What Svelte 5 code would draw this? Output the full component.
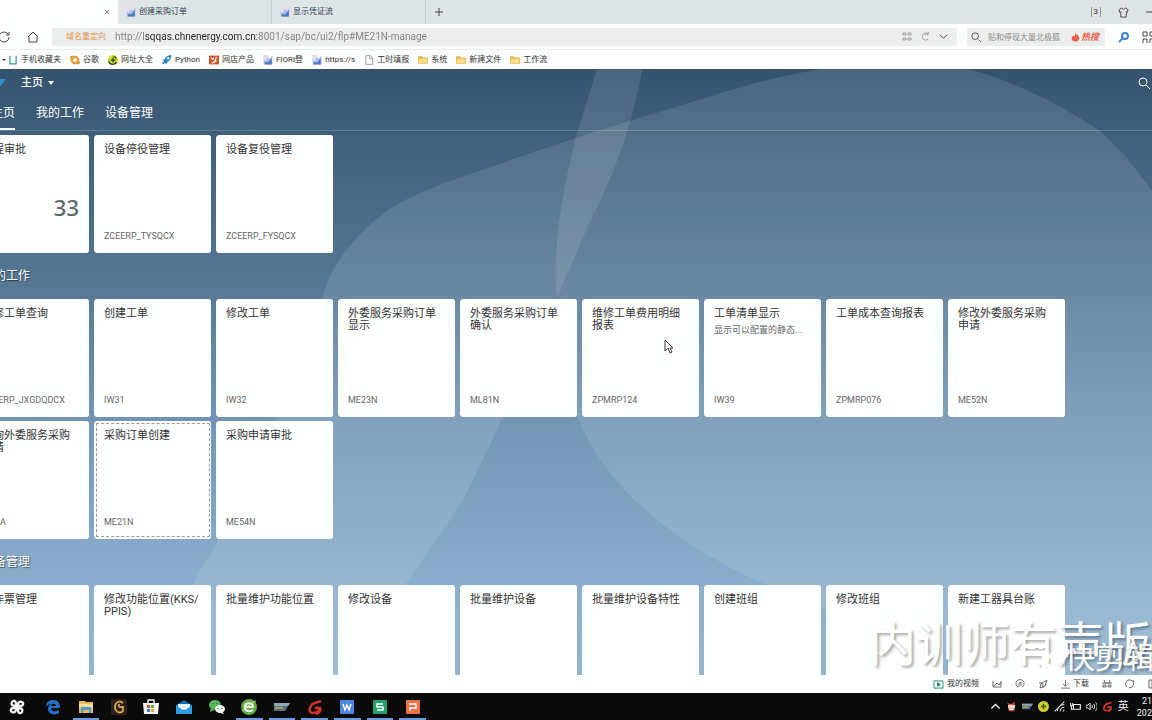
<script>
  let address = 'http://lsqqas.chnenergy.com.cn:8001/sap/bc/ui2/flp#ME21N-manage'
  let keyword = '贴和停现大量北极狐'
  let current = 'ME21N'

  const tabs = ['创建采购订单', '显示凭证流']

  const bookmarks = [
    { icon: 'phone', label: '手机收藏夹' },
    { icon: 'song', label: '谷歌' },
    { icon: 'compass', label: '网址大全' },
    { icon: 'rocket', label: 'Python' },
    { icon: 'shop', label: '网店产品' },
    { icon: 'sap', label: 'FIORI登' },
    { icon: 'sap', label: 'https://s' },
    { icon: 'page', label: '工时填报' },
    { icon: 'folder', label: '系统' },
    { icon: 'folder', label: '新建文件' },
    { icon: 'folder', label: '工作流' }
  ]

  const sections = ['主页', '我的工作', '设备管理']

  const groups = [
    {
      title: '',
      tiles: [
        { title: '流程审批', count: 33 },
        { title: '设备停役管理', code: 'ZCEERP_TYSQCX' },
        { title: '设备复役管理', code: 'ZCEERP_FYSQCX' }
      ]
    },
    {
      title: '我的工作',
      tiles: [
        { title: '维修工单查询', code: 'ZCEERP_JXGDQDCX' },
        { title: '创建工单', code: 'IW31' },
        { title: '修改工单', code: 'IW32' },
        { title: '外委服务采购订单显示', code: 'ME23N' },
        { title: '外委服务采购订单确认', code: 'ML81N' },
        { title: '维修工单费用明细报表', code: 'ZPMRP124' },
        { title: '工单清单显示', sub: '显示可以配置的静态...', code: 'IW39' },
        { title: '工单成本查询报表', code: 'ZPMRP076' },
        { title: '修改外委服务采购申请', code: 'ME52N' },
        { title: '查询外委服务采购申请', code: 'ME5A' },
        { title: '采购订单创建', code: 'ME21N' },
        { title: '采购申请审批', code: 'ME54N' }
      ]
    },
    {
      title: '设备管理',
      tiles: [
        { title: '工作票管理' },
        { title: '修改功能位置(KKS/\nPPIS)' },
        { title: '批量维护功能位置' },
        { title: '修改设备' },
        { title: '批量维护设备' },
        { title: '批量维护设备特性' },
        { title: '创建班组' },
        { title: '修改班组' },
        { title: '新建工器具台账' }
      ]
    }
  ]

  const apps = [
    { icon: 'edge' },
    { icon: 'explorer', open: true },
    { icon: 'gold' },
    { icon: 'store' },
    { icon: 'mail' },
    { icon: 'wechat' },
    { icon: 'browser', open: true },
    { icon: 'logon', open: true },
    { icon: 'redg', open: true },
    { icon: 'writer', open: true },
    { icon: 'sheet', open: true },
    { icon: 'slides', open: true }
  ]

  const tray = ['up', 'santa', 'logon', 'shield', 'wifi', 'battery', 'volume', 'redg']
</script>

{#snippet mark(name)}
  <svg class="mark" viewBox="0 0 16 16" aria-hidden="true">
    {#if name === 'sap'}
      <path d="M0 0h9v9H0z" fill="#ead9ea" />
      <path d="M1 15V8l4 1 3-5 3 2 4-5v14z" fill="#9fbcec" />
      <path d="M3 15v-4l5 1 6-7v10z" fill="#3d63b5" opacity=".8" />
    {:else if name === 'phone'}
      <path d="M3 1v13h10V1" fill="none" stroke="#3a9d83" stroke-width="2" />
    {:else if name === 'song'}
      <circle cx="8" cy="8" r="7" fill="#e2a13e" />
      <path d="M8 4l4 4-4 4-4-4z" fill="#fff3d6" />
      <path d="M0 5l4-4M12 15l4-4" stroke="#b9772a" stroke-width="2" />
    {:else if name === 'compass'}
      <circle cx="8" cy="8" r="8" fill="#d3dc2e" />
      <path d="M1 10a7 7 0 0 0 13 1M8 4v8M4 8h8M9 2a5 5 0 0 1 4 4" fill="none" stroke="#244a1c" stroke-width="2" />
    {:else if name === 'rocket'}
      <path d="M15 0C9 0 5 4 4 7l-4 1 4 2 2 5 3-4c4-2 6-6 6-11z" fill="#2b86c8" />
      <circle cx="10" cy="5" r="2" fill="#e8f4fc" />
      <path d="M1 14l4-4" stroke="#1b5c94" stroke-width="2" />
    {:else if name === 'shop'}
      <path d="M0 1h16v14H0z" fill="#c9552f" />
      <path d="M3 4l3 3 2-3M4 13c4 0 6-3 8-10M8 12l4-3" fill="none" stroke="#fbe3cf" stroke-width="2" />
    {:else if name === 'page'}
      <path d="M3 1h7l4 4v10H3zM9 1v5h5" fill="#fff" stroke="#888" stroke-width="1.3" />
    {:else}
      <path d="M0 2h6l2 2h8v10H0z" fill="#e9b44f" />
      <path d="M1 6h14v7H1z" fill="#fbdc8c" />
    {/if}
  </svg>
{/snippet}

{#snippet appIcon(name)}
  <svg class="app-icon" viewBox="0 0 16 16" aria-hidden="true">
    {#if name === 'start'}
      <g fill="none" stroke="#f4f4f4" stroke-width="2.4" stroke-linecap="round">
        <path d="M7 7V4c0-2-3-3-4-1s0 4 3 4" />
        <path d="M9 7h3c2 0 3-3 1-4s-4 0-4 3" />
        <path d="M9 9v3c0 2 3 3 4 1s0-4-3-4" />
        <path d="M7 9H4c-2 0-3 3-1 4s4 0 4-3" />
      </g>
    {:else if name === 'edge'}
      <path d="M1 8C1 3 4 1 8 1c5 0 7 3 7 8H6c0 4 5 4 8 2v3c-5 3-11 1-11-4 0-3 2-5 4-5-3 0-5 1-6 3zm5-1h5c0-3-5-3-5 0z" fill="#1f73c9" />
    {:else if name === 'explorer'}
      <path d="M1 2h6l1 1h7v11H1z" fill="#e8bd5c" />
      <path d="M1 5h14v4H1z" fill="#f9dc93" />
      <path d="M3 8h10v6h-2v-3H5v3H3z" fill="#4b9ac9" />
    {:else if name === 'gold'}
      <rect x="0" y="0" width="16" height="16" rx="2" fill="#2b2219" />
      <path d="M12 4C9 1 4 3 4 8s5 7 8 4V8H8M8 5v3" fill="none" stroke="#d99f4c" stroke-width="1.8" />
    {:else if name === 'store'}
      <path d="M0 4h16l-1 11H1z" fill="#f7f7f2" />
      <path d="M5 4V1h6v3" fill="none" stroke="#f7f7f2" stroke-width="1.4" />
      <path d="M4 6h3v3H4z" fill="#d8552f" /><path d="M8 6h3v3H8z" fill="#6da838" />
      <path d="M4 10h3v3H4z" fill="#2f84c8" /><path d="M8 10h3v3H8z" fill="#e5ab2b" />
    {:else if name === 'mail'}
      <path d="M0 6l8-5 8 5v9H0z" fill="#1767ad" />
      <path d="M2 5h12v6H2z" fill="#e6f2fa" />
      <path d="M0 6l8 6 8-6v9H0z" fill="#2f9de0" />
    {:else if name === 'wechat'}
      <ellipse cx="6" cy="6" rx="6" ry="5" fill="#58b957" />
      <path d="M2 9l-1 4 4-2z" fill="#58b957" />
      <ellipse cx="11" cy="10" rx="5" ry="4" fill="#eef1ea" />
      <path d="M13 12l2 3-4-1z" fill="#eef1ea" />
      <path d="M4 4v1M8 4v1M9 9v1M13 9v1" stroke="#2c4b2b" />
    {:else if name === 'browser'}
      <circle cx="8" cy="8" r="8" fill="#62ac48" />
      <path d="M4 8h8c0-5-8-5-8 0s5 5 8 3" fill="none" stroke="#f3f9ec" stroke-width="2" />
      <path d="M1 12C5 9 11 3 15 2" stroke="#cde3a4" fill="none" />
    {:else if name === 'logon'}
      <path d="M0 4h16l-5 8H0z" fill="#4f7288" />
      <path d="M0 4h16l-2 3H0z" fill="#8ba7b8" />
      <path d="M1 8h9l-2 2H1z" fill="#b79d4a" />
    {:else if name === 'redg'}
      <path d="M14 2L8 4C3 5 0 14 6 14c5 0 7-3 7-5H8M13 9c1 3-1 5-4 6" fill="none" stroke="#cf3028" stroke-width="2.6" />
    {:else if name === 'writer'}
      <rect x="1" y="1" width="14" height="14" rx="1" fill="#4c86dd" />
      <path d="M4 5l2 6 2-5 2 5 2-6" fill="none" stroke="#fff" stroke-width="1.4" />
    {:else if name === 'sheet'}
      <rect x="1" y="1" width="14" height="14" rx="1" fill="#27a06c" />
      <path d="M11 5H5v3h6v3H5" fill="none" stroke="#fff" stroke-width="1.4" />
    {:else if name === 'slides'}
      <rect x="1" y="1" width="14" height="14" rx="1" fill="#ea7145" />
      <path d="M4 5h7v4H5v3" fill="none" stroke="#fff" stroke-width="1.4" />
    {:else if name === 'up'}
      <path d="M2 11l6-6 6 6" fill="none" stroke="#eee" stroke-width="1.8" />
    {:else if name === 'santa'}
      <circle cx="8" cy="9" r="5" fill="#f0c7a0" />
      <path d="M2 2l5 3 6-4-1 6H3zM4 11h8v4H4z" fill="#d34a3c" />
      <path d="M3 7h10M5 12h6" stroke="#fff" stroke-width="2" />
    {:else if name === 'shield'}
      <circle cx="8" cy="8" r="8" fill="#d3cf31" />
      <path d="M8 4v8M4 8h8" stroke="#4a5d12" stroke-width="2.4" />
    {:else if name === 'wifi'}
      <path d="M1 15L15 1M5 15A10 10 0 0 1 15 5M9 15a6 6 0 0 1 6-6M13 15l2-2" fill="none" stroke="#ddd" stroke-width="1.6" />
    {:else if name === 'battery'}
      <path d="M5 5h10v7H5zM1 3v4h3V3M2 7v5h3" fill="none" stroke="#eee" stroke-width="1.6" />
    {:else if name === 'volume'}
      <path d="M0 6h3l3-3v10l-3-3H0zM9 6v4M11 4c2 2 2 6 0 8M14 2c3 4 3 8 0 12" fill="none" stroke="#eee" stroke-width="1.4" />
    {/if}
  </svg>
{/snippet}

<div class="desktop">
  <header class="browser">
    <div class="tab-strip">
      <div class="tab active">
        <button class="plain close" aria-label="关闭">
          <svg viewBox="0 0 8 8" width="6" height="6"><path d="M1 1l6 6M7 1L1 7" /></svg>
        </button>
      </div>
      {#each tabs as tab}
        <button class="plain tab">{@render mark('sap')}{tab}</button>
      {/each}
      <button class="plain new-tab" aria-label="新标签页">
        <svg viewBox="0 0 10 10" width="10" height="10"><path d="M5 1v8M1 5h8" /></svg>
      </button>
      <div class="window-tools">
        <span class="tab-count">3</span>
        <button class="plain" aria-label="皮肤">
          <svg viewBox="0 0 12 12" width="11" height="11"><path d="M4 1L1 3l1 3 1-1v6h6V5l1 1 1-3-3-2c-1 2-3 2-4 0z" /></svg>
        </button>
        <button class="plain minimise" aria-label="最小化">
          <svg viewBox="0 0 10 10" width="10" height="10"><path d="M0 5h10" /></svg>
        </button>
      </div>
    </div>

    <div class="address-row">
      <button class="plain reload" aria-label="刷新">
        <svg viewBox="0 0 12 12" width="12" height="12"><path d="M10 3a5 5 0 1 0 1 3M11 1v3H8" /></svg>
      </button>
      <button class="plain home" aria-label="主页">
        <svg viewBox="0 0 12 12" width="12" height="12"><path d="M1 6l5-5 5 5H10v5H2V6z" /></svg>
      </button>
      <div class="field address">
        <span class="redirect">域名重定向</span>
        <input class="url" aria-label="地址" bind:value={address} />
        <svg class="grey" viewBox="0 0 10 10" width="10" height="10"><path d="M1 1h3v2H1zM6 1h3v2H6zM1 6h3v2H1zM6 6h3v2H6z" /></svg>
        <svg class="grey" viewBox="0 0 10 10" width="9" height="9"><path d="M8 2a4 4 0 1 0 0 6M8 0v3H4" /></svg>
        <svg viewBox="0 0 10 10" width="9" height="9"><path d="M1 3l4 4 4-4" /></svg>
      </div>
      <div class="field search">
        <svg viewBox="0 0 12 12" width="10" height="10"><path d="M9 9l3 3" /><circle cx="5" cy="5" r="4" /></svg>
        <input class="keyword" aria-label="搜索" bind:value={keyword} />
        <span class="hot">
          <svg class="flame" viewBox="0 0 10 10" width="9" height="10"><path d="M5 0c0 3 3 2 4 5 1 4-2 5-4 5S0 9 1 5l2-2 1 2z" /></svg>热搜
        </span>
      </div>
      <svg class="finder" viewBox="0 0 12 12" width="12" height="12"><circle cx="7" cy="5" r="3" /><path d="M5 7l-4 4" /></svg>
      <svg class="blocks" viewBox="0 0 12 12" width="12" height="12"><path d="M1 5V1h4v4zM8 5V1h4v4zM1 12V8h4v4M8 12V8h4v4" /></svg>
    </div>

    <nav class="bookmarks">
      <span class="caret"></span>
      {#each bookmarks as item}
        <a href="#bookmark">{@render mark(item.icon)}{item.label}</a>
      {/each}
    </nav>
  </header>

  <main class="launchpad">
    <svg class="backdrop" viewBox="0 0 1152 606" preserveAspectRatio="none" aria-hidden="true">
      <g fill="#fff">
        <path opacity=".11" d="M150 606L200 501L213 481C235 435 260 390 275 349L323 227C330 200 350 170 384 144C415 122 450 113 479 102C530 84 580 67 630 52L728 22C760 12 800 3 823 0C870-7 920-8 967 0C1010 10 1060 35 1100 62C1125 85 1140 105 1152 122V606H1000C900 560 830 545 767 516C670 475 600 410 578 348C568 325 560 290 555 227C545 260 525 310 503 348C490 375 475 410 457 441L405 516L345 606z" />
        <path opacity=".11" d="M597 0H642C632 60 612 110 585 164L557 229C552 190 560 130 577 64z" />
      </g>
    </svg>

    <div class="shell-bar">
      <span class="logo"></span>
      <button class="plain shell-title">主页<span class="caret"></span></button>
      <button class="plain shell-search" aria-label="搜索">
        <svg viewBox="0 0 12 12" width="12" height="12"><circle cx="5" cy="5" r="4" /><path d="M8 8l4 4" /></svg>
      </button>
    </div>
    <nav class="sections">
      {#each sections as section, i}
        <a href="#section" class:selected={i === 0}>{section}</a>
      {/each}
    </nav>

    <div class="groups">
      {#each groups as group}
        <section>
          {#if group.title}<h2>{group.title}</h2>{/if}
          <div class="tiles">
            {#each group.tiles as tile}
              <a href="#tile" class="tile" class:focused={tile.code === current}>
                <span class="tile-title">{tile.title}</span>
                {#if tile.sub}<span class="tile-sub">{tile.sub}</span>{/if}
                {#if tile.count}<span class="tile-count">{tile.count}</span>{/if}
                {#if tile.code}<span class="tile-code">{tile.code}</span>{/if}
              </a>
            {/each}
          </div>
        </section>
      {/each}
    </div>
  </main>

  <footer class="status">
    <button class="plain video">
      <svg viewBox="0 0 12 10" width="11" height="9"><path d="M1 1h10v8H1z" /><path d="M5 3l3 2-3 2z" fill="#17816a" /></svg>我的视频
    </button>
    <svg viewBox="0 0 10 10" width="10" height="10"><path d="M1 2v6h8V2M2 7l3-3 2 2 2-3" /></svg>
    <svg viewBox="0 0 10 10" width="10" height="10"><path d="M3 8a4 4 0 1 1 4 0M4 8V4l2-1v4" /></svg>
    <svg viewBox="0 0 10 10" width="10" height="10"><path d="M2 9l1-4 6-4-2 6zM1 4h4M5 9V5" /></svg>
    <button class="plain download">
      <svg viewBox="0 0 10 10" width="9" height="9"><path d="M5 0v7M2 4l3 3 3-3M0 9h10" /></svg>下载
    </button>
    <svg viewBox="0 0 10 10" width="10" height="10"><path d="M2 1l1 3h4l1-3M0 4h10M1 6h3v2H1zM6 6h3v2H6z" /></svg>
    <svg viewBox="0 0 10 10" width="10" height="10"><path d="M2 8a4 4 0 1 1 5 0L4 9M8 1l1 2" /></svg>
    <svg class="edge-icon" viewBox="0 0 10 10" width="10" height="10"><path d="M1 1h8v8H1zM4 1v8" /></svg>
  </footer>

  <div class="taskbar">
    <button class="plain start" aria-label="开始">{@render appIcon('start')}</button>
    <div class="apps">
      {#each apps as app}
        <button class="plain app" class:open={app.open} aria-label={app.icon}>{@render appIcon(app.icon)}</button>
      {/each}
    </div>
    <div class="tray">
      {#each tray as item}
        {@render appIcon(item)}
      {/each}
      <span class="ime">英</span>
      <span class="clock"><span>21</span><span>202</span></span>
    </div>
  </div>

  <svg class="pointer" viewBox="0 0 10 15" aria-hidden="true">
    <path d="M1 1v11l3-3 2 5 2-1-2-4h3z" fill="#fff" stroke="#333" />
  </svg>
  <div class="watermark">内训师有声版</div>
  <div class="watermark maker">
    <svg viewBox="0 0 40 28" width="40" height="28" aria-hidden="true">
      <path d="M2 9h26v17H2zM28 16l9-6v15l-9-6M6 5a4 4 0 0 1 8 0M17 5a4 4 0 0 1 8 0" fill="none" stroke="#fff" stroke-width="4" />
    </svg>
    快剪辑
  </div>
</div>

<style>
  :global(body) {
    overflow: hidden;
  }

  .desktop {
    position: relative;
    display: flex;
    flex-direction: column;
    height: 100vh;
    overflow: hidden;
    background: #fdfffe;
    color: #333;
    font-family: Roboto, 'Noto Sans CJK SC', sans-serif;
    font-size: 8px;
    line-height: 12px;
  }

  .desktop :global(svg) {
    flex-shrink: 0;
  }

  .plain {
    display: flex;
    align-items: center;
    padding: 0;
    border: 0;
    background: none;
    color: inherit;
    font: inherit;
    white-space: nowrap;
  }

  a {
    color: inherit;
    text-decoration: none;
  }

  .browser svg:not(.mark),
  .status svg {
    fill: none;
    stroke: #444;
  }

  .mark {
    width: 10px;
    height: 10px;
    margin-right: 3px;
  }

  .caret {
    border: 3px solid transparent;
    border-top: 4px solid currentColor;
    border-bottom: 0;
  }

  /* browser chrome */
  .tab-strip {
    display: flex;
    height: 24px;
    background: #dfe5e6;
  }

  .tab {
    box-sizing: border-box;
    width: 154px;
    padding-left: 8px;
    border-right: 1px solid #c9d0d1;
    color: #2f4257;
  }

  .tab.active {
    display: flex;
    justify-content: flex-end;
    width: 118px;
    padding-right: 8px;
    border: 0;
    background: #fdfffe;
  }

  .new-tab {
    margin-left: 8px;
  }

  .window-tools {
    display: flex;
    align-items: center;
    gap: 17px;
    margin-left: auto;
    margin-right: -4px;
  }

  .tab-count {
    padding: 0 2px;
    border: solid #999;
    border-width: 0 1px;
    line-height: 10px;
  }

  .address-row {
    display: flex;
    align-items: center;
    height: 25px;
    border-bottom: 1px solid #e8ebeb;
    overflow: hidden;
  }

  .reload {
    margin-left: -2px;
  }

  .home {
    margin: 0 13px 0 17px;
  }

  .field {
    display: flex;
    align-items: center;
    height: 18px;
    background: #eceeed;
    border-radius: 2px;
  }

  .address {
    flex: 1;
    gap: 9px;
    padding: 0 9px 0 14px;
  }

  .redirect {
    color: #e0944a;
  }

  input {
    flex: 1;
    min-width: 0;
    height: 16px;
    padding: 0;
    border: 0;
    outline: 0;
    background: none;
    color: #8c8c8c;
    font: inherit;
  }

  .url {
    background: linear-gradient(90deg, #808080 30px, #222 30px, #222 142px, #808080 142px);
    background-clip: text;
    color: transparent;
    font-size: 10px;
  }

  .browser svg.grey {
    stroke: #999;
  }

  .search {
    gap: 7px;
    box-sizing: border-box;
    width: 138px;
    margin: 0 13px 0 10px;
    padding: 0 6px 0 4px;
  }

  .hot {
    display: flex;
    align-items: center;
    gap: 1px;
    color: #e5604d;
    font-size: 9px;
    font-style: italic;
    font-weight: 700;
  }

  .browser svg.flame {
    fill: #e5604d;
    stroke: none;
  }

  .browser svg.finder {
    stroke: #4285c8;
    stroke-width: 2;
  }

  .blocks {
    margin: 0 -2px 0 12px;
  }

  .bookmarks {
    display: flex;
    align-items: center;
    gap: 9px;
    height: 19px;
    white-space: nowrap;
  }

  .bookmarks .caret {
    border-width: 2px;
    border-bottom: 0;
    margin: 0 -7px 0 2px;
  }

  .bookmarks a {
    display: flex;
    align-items: center;
  }

  /* launchpad */
  .launchpad {
    position: relative;
    flex: 1;
    min-height: 0;
    overflow: hidden;
    background: linear-gradient(#33536e, #3e5e79 10%, #557693 34%, #7598b6 60%, #8bafcc 86%, #94b5d0);
    box-shadow: inset 0 1px #3c4f5e;
    color: #fff;
  }

  .backdrop {
    position: absolute;
    inset: 0;
    width: 100%;
    height: 100%;
  }

  .shell-bar,
  .sections,
  .groups {
    position: relative;
  }

  .shell-bar {
    display: flex;
    align-items: center;
    height: 28px;
  }

  .logo {
    width: 6px;
    height: 8px;
    background: #2a8fd4;
    clip-path: polygon(0 0, 100% 0, 0 100%);
  }

  .shell-title {
    gap: 5px;
    margin-left: 15px;
    font-size: 11px;
    font-weight: 500;
  }

  .shell-search {
    margin-left: auto;
    margin-right: 2px;
  }

  .shell-search svg {
    fill: none;
    stroke: #fff;
  }

  .sections {
    display: flex;
    gap: 21px;
    height: 33px;
    margin-left: -9px;
    border-bottom: 1px solid rgba(255, 255, 255, 0.2);
    font-size: 12px;
    line-height: 33px;
  }

  .sections .selected {
    box-shadow: inset 0 -2px #fff;
  }

  .groups {
    margin: 4px 0 0 -28px;
  }

  h2 {
    margin: 0;
    padding: 0 10px;
    font-size: 12px;
    font-weight: 400;
    line-height: 46px;
    text-shadow: 1px 1px 1px rgba(0, 0, 0, 0.5);
  }

  .tiles {
    display: flex;
    flex-wrap: wrap;
    gap: 4px;
  }

  .tile {
    box-sizing: border-box;
    display: flex;
    flex-direction: column;
    width: 118px;
    height: 118px;
    padding: 9px 10px 11px;
    border: solid transparent;
    border-width: 0 1px 0 0;
    border-radius: 3px;
    background: #fdfffe padding-box;
    color: #333;
  }

  .tile.focused {
    outline: 1px dashed #999;
    outline-offset: -3px;
  }

  .tile-title {
    font-size: 11px;
    line-height: 12px;
    white-space: pre-line;
  }

  .tile-sub {
    margin-top: 4px;
    color: #666;
    font-size: 9px;
    white-space: nowrap;
  }

  .tile-count {
    margin-top: 36px;
    color: #5a6a6b;
    font-family: 'Noto Sans', sans-serif;
    font-size: 22px;
    font-weight: 500;
    line-height: 30px;
    text-align: right;
  }

  .tile-code {
    margin-top: auto;
    color: #666;
    font-size: 9px;
  }

  /* status bar and taskbar */
  .status {
    display: flex;
    align-items: center;
    justify-content: flex-end;
    gap: 13px;
    height: 18px;
    overflow: hidden;
  }

  .status svg {
    stroke: #666;
  }

  .video,
  .download {
    gap: 3px;
  }

  .status .video svg {
    stroke: #17816a;
  }

  .edge-icon {
    margin-right: -6px;
  }

  .taskbar {
    display: flex;
    height: 27px;
    background: #0a0a0a;
    color: #eee;
  }

  .app-icon {
    width: 16px;
    height: 16px;
  }

  .start {
    padding: 0 12px 0 9px;
  }

  .apps {
    display: grid;
    grid-template-columns: repeat(12, 1fr);
    width: 392px;
  }

  .app {
    justify-content: center;
    margin: 0 3px;
  }

  .app.open {
    box-shadow: inset 0 -2px #6e9be0;
  }

  .tray {
    display: flex;
    align-items: center;
    gap: 5px;
    margin-left: auto;
  }

  .tray .app-icon {
    width: 11px;
    height: 11px;
  }

  .ime {
    font-size: 11px;
  }

  .clock {
    display: flex;
    flex-direction: column;
    align-items: flex-end;
    margin-left: 3px;
    font-size: 9px;
  }

  /* overlays */
  .pointer {
    position: absolute;
    top: 339px;
    left: 664px;
    width: 10px;
    height: 15px;
  }

  .watermark {
    position: absolute;
    right: 1px;
    bottom: 50px;
    color: #fff;
    font-size: 47px;
    line-height: 50px;
    white-space: nowrap;
    text-shadow: 2px 2px 3px rgba(0, 0, 0, 0.35);
    pointer-events: none;
  }

  .maker {
    right: -3px;
    bottom: 46px;
    display: flex;
    align-items: center;
    gap: 9px;
    font-size: 30px;
    line-height: 32px;
  }
</style>
